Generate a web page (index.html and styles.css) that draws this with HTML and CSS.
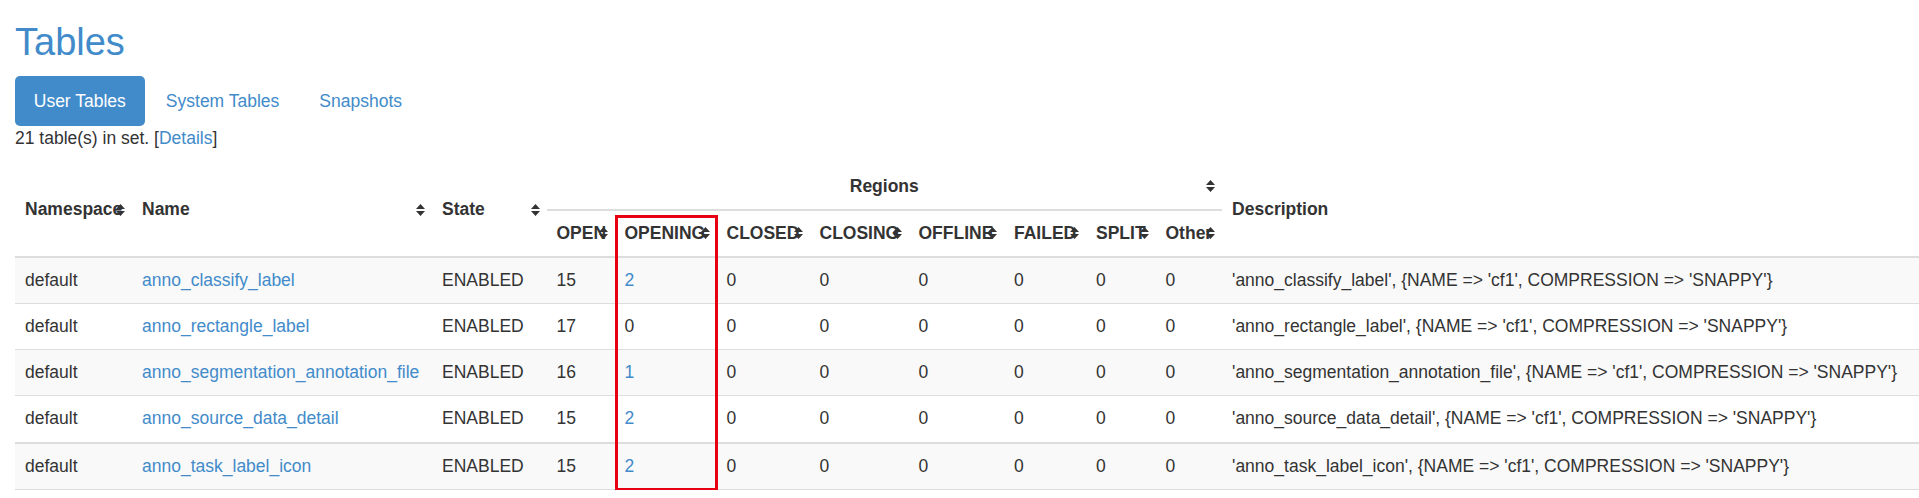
FILE: index.html
```html
<!DOCTYPE html>
<html lang="en">
<head>
<meta charset="utf-8">
<title>Tables</title>
<link rel="stylesheet" href="styles.css">
</head>
<body>
<div class="page">
  <h1 class="title">Tables</h1>
  <ul class="pills">
    <li class="active"><a href="#">User Tables</a></li>
    <li><a href="#">System Tables</a></li>
    <li><a href="#">Snapshots</a></li>
  </ul>
  <p class="count">21 table(s) in set. [<a href="#">Details</a>]</p>
  <div class="table-wrap">
    <table class="tables">
      <colgroup>
        <col class="c-ns"><col class="c-name"><col class="c-state">
        <col class="c-open"><col class="c-opening"><col class="c-closed"><col class="c-closing">
        <col class="c-offline"><col class="c-failed"><col class="c-split"><col class="c-other">
        <col class="c-desc">
      </colgroup>
      <thead>
        <tr>
          <th rowspan="2">Namespace<svg class="sort" viewBox="0 0 9 12"><path d="M0 5L4.5 0L9 5Z M0 7L9 7L4.5 12Z"/></svg></th>
          <th rowspan="2">Name<svg class="sort" viewBox="0 0 9 12"><path d="M0 5L4.5 0L9 5Z M0 7L9 7L4.5 12Z"/></svg></th>
          <th rowspan="2">State<svg class="sort" viewBox="0 0 9 12"><path d="M0 5L4.5 0L9 5Z M0 7L9 7L4.5 12Z"/></svg></th>
          <th colspan="8" class="group">Regions<svg class="sort" viewBox="0 0 9 12"><path d="M0 5L4.5 0L9 5Z M0 7L9 7L4.5 12Z"/></svg></th>
          <th rowspan="2">Description</th>
        </tr>
        <tr>
          <th>OPEN<svg class="sort" viewBox="0 0 9 12"><path d="M0 5L4.5 0L9 5Z M0 7L9 7L4.5 12Z"/></svg></th>
          <th>OPENING<svg class="sort" viewBox="0 0 9 12"><path d="M0 5L4.5 0L9 5Z M0 7L9 7L4.5 12Z"/></svg></th>
          <th>CLOSED<svg class="sort" viewBox="0 0 9 12"><path d="M0 5L4.5 0L9 5Z M0 7L9 7L4.5 12Z"/></svg></th>
          <th>CLOSING<svg class="sort" viewBox="0 0 9 12"><path d="M0 5L4.5 0L9 5Z M0 7L9 7L4.5 12Z"/></svg></th>
          <th>OFFLINE<svg class="sort" viewBox="0 0 9 12"><path d="M0 5L4.5 0L9 5Z M0 7L9 7L4.5 12Z"/></svg></th>
          <th>FAILED<svg class="sort" viewBox="0 0 9 12"><path d="M0 5L4.5 0L9 5Z M0 7L9 7L4.5 12Z"/></svg></th>
          <th>SPLIT<svg class="sort" viewBox="0 0 9 12"><path d="M0 5L4.5 0L9 5Z M0 7L9 7L4.5 12Z"/></svg></th>
          <th>Other<svg class="sort" viewBox="0 0 9 12"><path d="M0 5L4.5 0L9 5Z M0 7L9 7L4.5 12Z"/></svg></th>
        </tr>
      </thead>
      <tbody>
        <tr>
          <td>default</td><td><a href="#">anno_classify_label</a></td><td>ENABLED</td>
          <td>15</td><td><a href="#">2</a></td><td>0</td><td>0</td><td>0</td><td>0</td><td>0</td><td>0</td>
          <td>'anno_classify_label', {NAME =&gt; 'cf1', COMPRESSION =&gt; 'SNAPPY'}</td>
        </tr>
        <tr>
          <td>default</td><td><a href="#">anno_rectangle_label</a></td><td>ENABLED</td>
          <td>17</td><td>0</td><td>0</td><td>0</td><td>0</td><td>0</td><td>0</td><td>0</td>
          <td>'anno_rectangle_label', {NAME =&gt; 'cf1', COMPRESSION =&gt; 'SNAPPY'}</td>
        </tr>
        <tr>
          <td>default</td><td><a href="#">anno_segmentation_annotation_file</a></td><td>ENABLED</td>
          <td>16</td><td><a href="#">1</a></td><td>0</td><td>0</td><td>0</td><td>0</td><td>0</td><td>0</td>
          <td>'anno_segmentation_annotation_file', {NAME =&gt; 'cf1', COMPRESSION =&gt; 'SNAPPY'}</td>
        </tr>
        <tr>
          <td>default</td><td><a href="#">anno_source_data_detail</a></td><td>ENABLED</td>
          <td>15</td><td><a href="#">2</a></td><td>0</td><td>0</td><td>0</td><td>0</td><td>0</td><td>0</td>
          <td>'anno_source_data_detail', {NAME =&gt; 'cf1', COMPRESSION =&gt; 'SNAPPY'}</td>
        </tr>
        <tr class="sep">
          <td>default</td><td><a href="#">anno_task_label_icon</a></td><td>ENABLED</td>
          <td>15</td><td><a href="#">2</a></td><td>0</td><td>0</td><td>0</td><td>0</td><td>0</td><td>0</td>
          <td>'anno_task_label_icon', {NAME =&gt; 'cf1', COMPRESSION =&gt; 'SNAPPY'}</td>
        </tr>
      </tbody>
    </table>
    <div class="highlight"></div>
  </div>
</div>
</body>
</html>
```
FILE: styles.css
```css
* { box-sizing: border-box; }
html, body { margin: 0; padding: 0; background: #fff; }
body {
  font-family: "Liberation Sans", Arial, Helvetica, sans-serif;
  font-size: 17.5px;
  line-height: 25px;
  color: #333;
  overflow: hidden;
}
a { color: #428bca; text-decoration: none; }

.page { padding-left: 15px; }

.title {
  font-size: 38px;
  font-weight: normal;
  line-height: 40px;
  margin: 22px 0 14px;
  color: #428bca;
}

.pills {
  list-style: none;
  margin: 0;
  padding: 0;
  display: flex;
}
.pills li + li { margin-left: 2.5px; }
.pills a {
  display: block;
  padding: 12.5px 18.75px;
  border-radius: 5px;
}
.pills .active a { background: #428bca; color: #fff; }

.count { margin: 0 0 12.5px; }

.table-wrap { position: relative; }

.tables {
  width: 1904px;
  table-layout: fixed;
  border-collapse: collapse;
  border-spacing: 0;
}
.c-ns { width: 117px; }
.c-name { width: 300px; }
.c-state { width: 114.5px; }
.c-open { width: 68px; }
.c-opening { width: 102px; }
.c-closed { width: 93px; }
.c-closing { width: 99px; }
.c-offline { width: 95.5px; }
.c-failed { width: 82px; }
.c-split { width: 69.5px; }
.c-other { width: 66.5px; }
.c-desc { width: 697px; }

.tables th, .tables td {
  padding: 10px;
  text-align: left;
  white-space: nowrap;
}
.tables th {
  position: relative;
  font-weight: bold;
  vertical-align: middle;
  border-bottom: 2px solid #ddd;
}
.tables th.group { text-align: center; }
.tables td {
  vertical-align: top;
  border-top: 1px solid #ddd;
  padding-top: 10.125px;
  padding-bottom: 10.125px;
}
.tables tbody tr:nth-child(odd) td { background: #f9f9f9; }
.tables tbody tr:last-child td { border-bottom: 1px solid #ddd; }
.tables tbody tr.sep td { border-top: 2px solid #ddd; }

.sort {
  position: absolute;
  right: 7px;
  top: 50%;
  width: 9px;
  height: 12px;
  margin-top: -6px;
  fill: #333;
}

.highlight {
  position: absolute;
  left: 600px;
  top: 51px;
  width: 103px;
  height: 276px;
  border: 3px solid #e60012;
  pointer-events: none;
}
```
